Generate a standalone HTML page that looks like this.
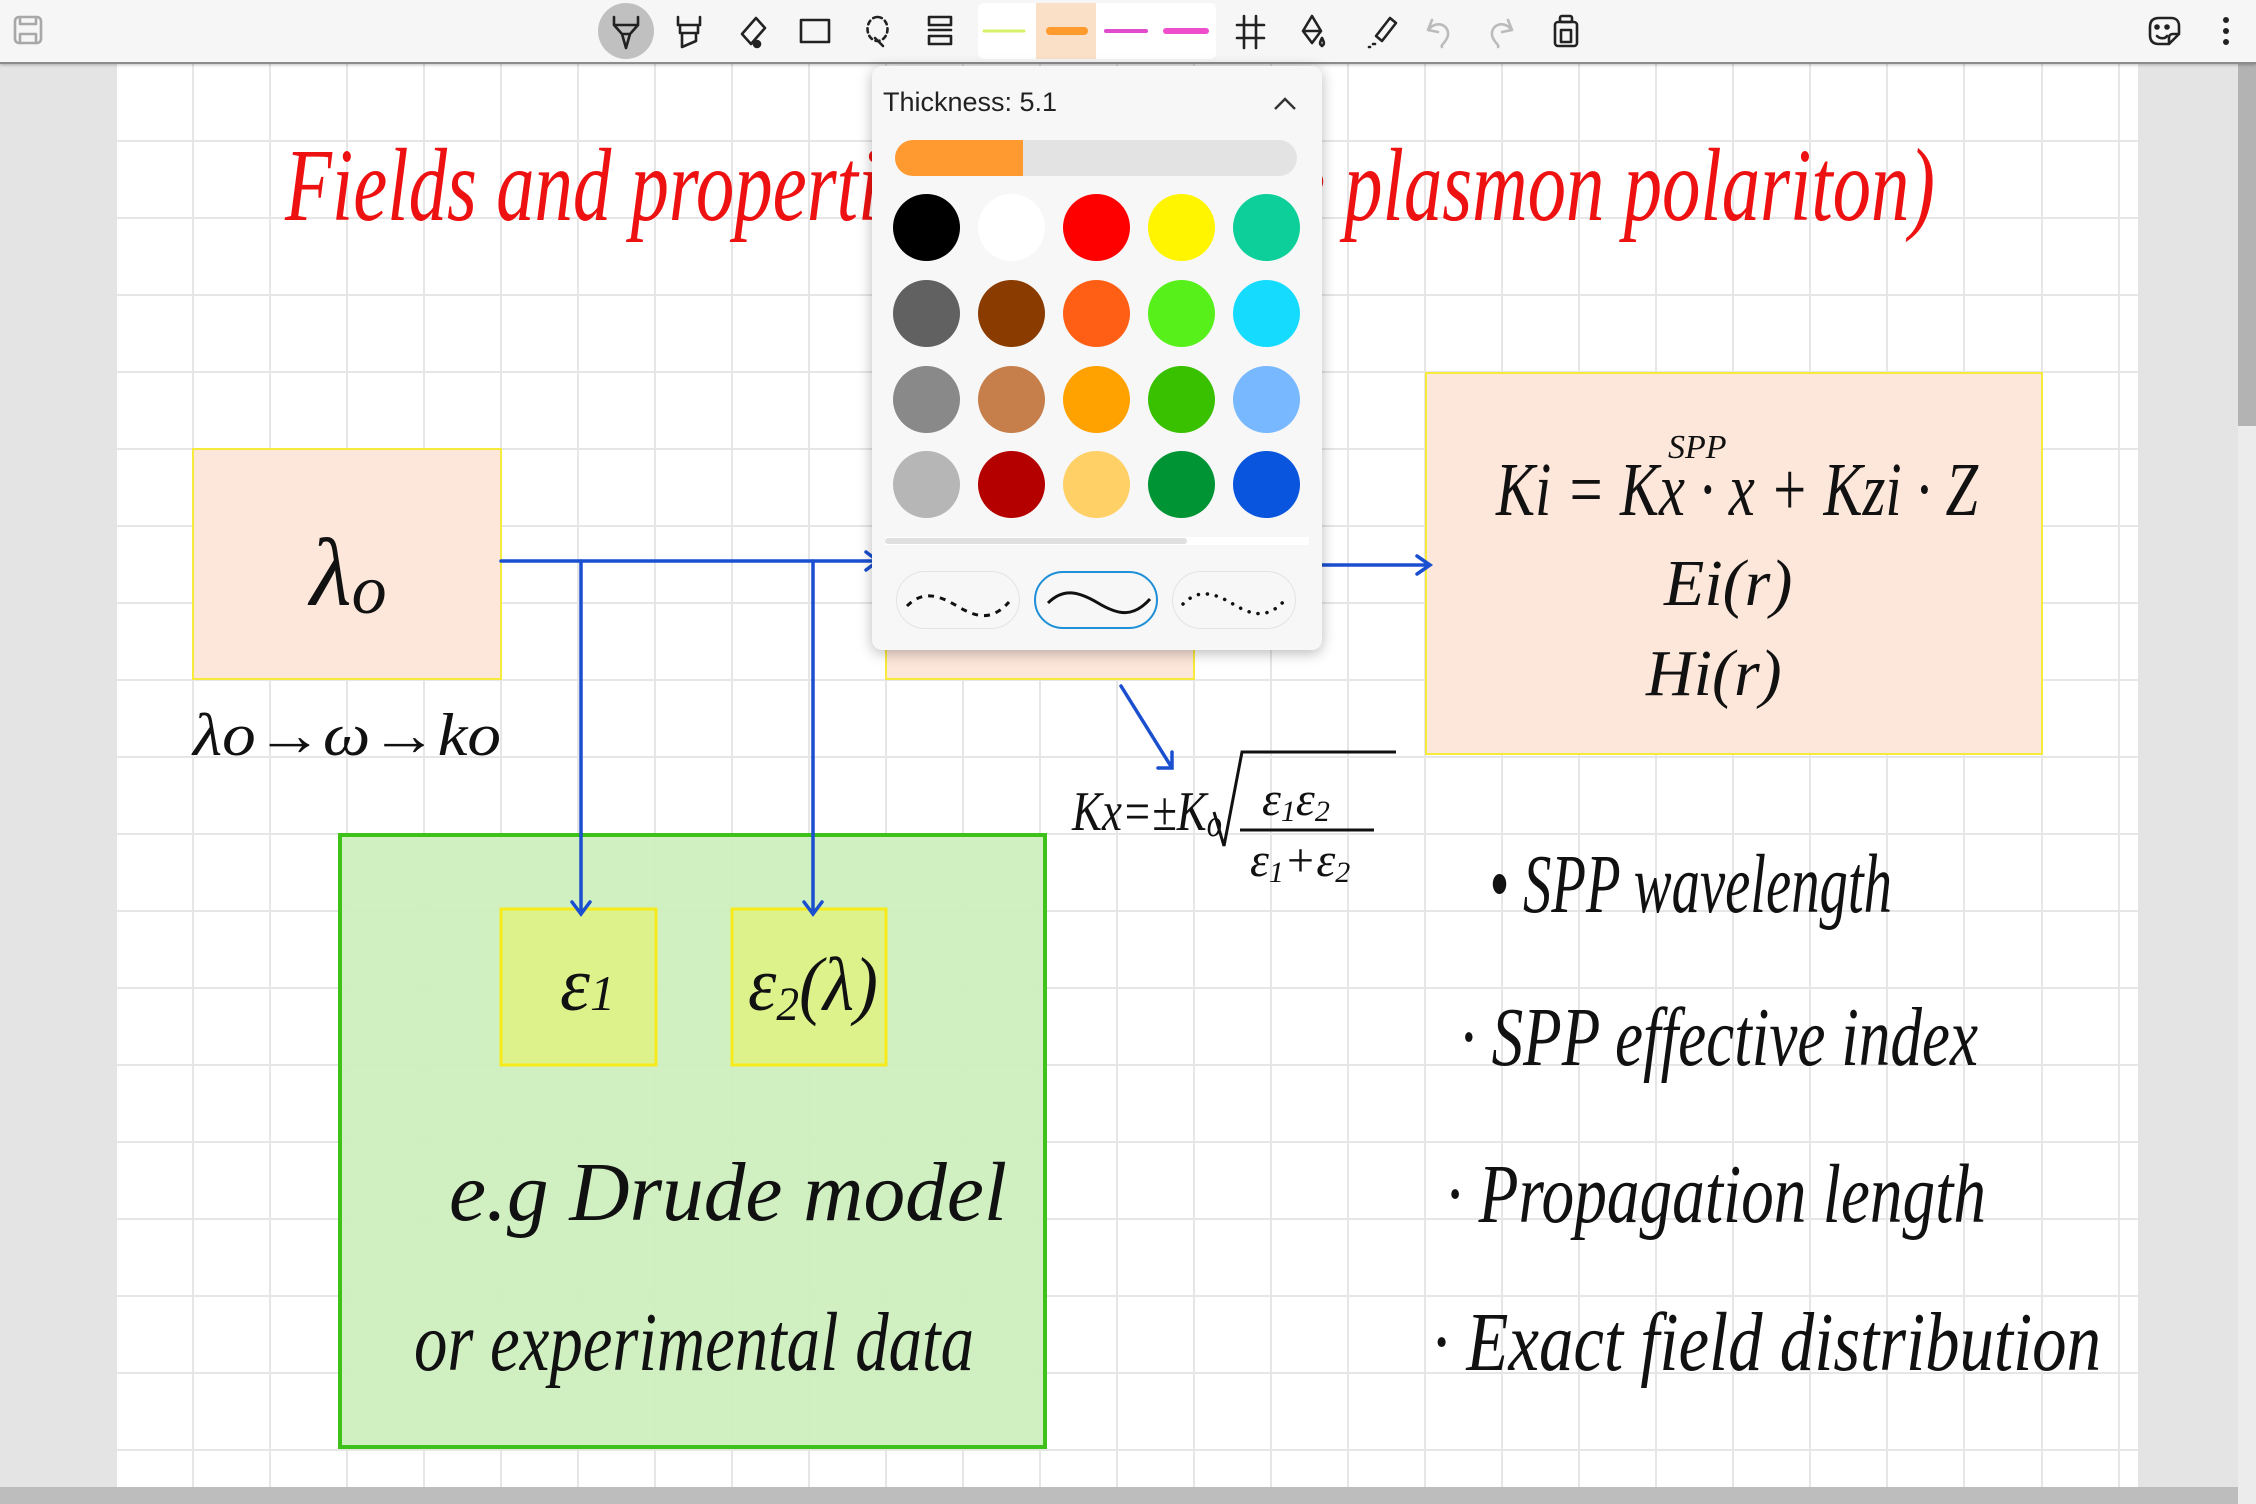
<!DOCTYPE html>
<html><head><meta charset="utf-8">
<style>
html,body{margin:0;padding:0;width:2256px;height:1504px;overflow:hidden;background:#e4e4e4;font-family:"Liberation Sans",sans-serif}
#tb{position:absolute;left:0;top:0;width:2256px;height:62px;background:#f6f6f6;border-bottom:2px solid #8c8c8c;box-shadow:0 1px 3px rgba(0,0,0,.25)}
#tb svg{position:absolute;left:0;top:0}
#pop{position:absolute;left:872px;top:66px;width:450px;height:584px;background:#f7f7f7;border-radius:10px;box-shadow:0 3px 14px rgba(0,0,0,.28)}
.lbl{position:absolute;left:11px;top:21px;font-size:27px;color:#222}
.c{position:absolute;width:67px;height:67px;border-radius:50%}
.ls{position:absolute;top:505px;width:124px;height:58px;border-radius:29px;border:1.5px solid #e3e3e3;box-sizing:border-box}
</style></head><body>
<svg width="2256" height="1504" style="position:absolute;left:0;top:0">
<rect x="117" y="64" width="2021" height="1424" fill="#fff"/>
<g stroke="#e6e6e6" stroke-width="2">
<path d="M193 64V1488M270 64V1488M347 64V1488M424 64V1488M501 64V1488M578 64V1488M655 64V1488M732 64V1488M809 64V1488M886 64V1488M963 64V1488M1040 64V1488M1117 64V1488M1194 64V1488M1271 64V1488M1348 64V1488M1425 64V1488M1502 64V1488M1579 64V1488M1656 64V1488M1733 64V1488M1810 64V1488M1887 64V1488M1964 64V1488M2042 64V1488M2119 64V1488"/>
<path d="M117 141H2138M117 218H2138M117 295H2138M117 372H2138M117 449H2138M117 526H2138M117 603H2138M117 680H2138M117 757H2138M117 834H2138M117 911H2138M117 988H2138M117 1065H2138M117 1142H2138M117 1219H2138M117 1296H2138M117 1373H2138M117 1450H2138"/>
</g>
<rect x="193" y="449" width="308" height="230" fill="#fde6da" stroke="#f6ea3a" stroke-width="2"/>
<rect x="886" y="449" width="308" height="230" fill="#fde6da" stroke="#f6ea3a" stroke-width="2"/>
<rect x="1426" y="373" width="616" height="381" fill="#fde6da" stroke="#f6ea3a" stroke-width="2"/>
<rect x="340" y="835" width="705" height="612" fill="#cdefbf" stroke="#3ec21a" stroke-width="4" fill-opacity=".95"/>
<rect x="501" y="909" width="155" height="156" fill="#def28c" stroke="#f6ea1a" stroke-width="3"/>
<rect x="732" y="909" width="154" height="156" fill="#def28c" stroke="#f6ea1a" stroke-width="3"/>
<g stroke="#1a4fd0" stroke-width="3.5" fill="none" stroke-linecap="round">
<path d="M501 561H878M866 552l12 9-12 9"/>
<path d="M1321 565H1430M1417 556l13 9-13 9"/>
<path d="M581 561V914M572 902l9 12 9-12"/>
<path d="M813 561V914M804 902l9 12 9-12"/>
<path d="M1121 686L1172 768M1172 752V768H1158"/>
</g>
<g font-family="Liberation Serif, serif" font-style="italic">
<text x="285" y="220" font-size="104" fill="#ee1111" textLength="1650" lengthAdjust="spacingAndGlyphs">Fields and properties of a surface plasmon polariton)</text>
<g fill="#111">
<text x="310" y="605" font-size="96">λ<tspan font-size="70" dy="8">o</tspan></text>
<text x="193" y="755" font-size="60" textLength="308" lengthAdjust="spacingAndGlyphs">λo→ω→ko</text>
<text x="560" y="1010" font-size="76">ε<tspan font-size="50">1</tspan></text>
<text x="748" y="1010" font-size="76" textLength="130" lengthAdjust="spacingAndGlyphs">ε<tspan font-size="48" dy="10">2</tspan><tspan dy="-10">(λ)</tspan></text>
<text x="449" y="1220" font-size="84" textLength="558" lengthAdjust="spacingAndGlyphs">e.g  Drude model</text>
<text x="414" y="1370" font-size="84" textLength="560" lengthAdjust="spacingAndGlyphs">or  experimental data</text>
<text x="1496" y="515" font-size="76" textLength="482" lengthAdjust="spacingAndGlyphs">Ki = Kx · x + Kzi · Z</text>
<text x="1668" y="458" font-size="34">SPP</text>
<text x="1664" y="605" font-size="66">Ei(r)</text>
<text x="1646" y="695" font-size="66">Hi(r)</text>
<text x="1072" y="830" font-size="56" textLength="150" lengthAdjust="spacingAndGlyphs">Kx=±K<tspan font-size="38" dy="6">o</tspan></text>
<path d="M1214 812l10 34 18-94h154" stroke="#111" stroke-width="3" fill="none"/>
<path d="M1240 830H1374" stroke="#111" stroke-width="3"/>
<text x="1262" y="815" font-size="48">ε<tspan font-size="30" dy="6">1</tspan><tspan dy="-6">ε</tspan><tspan font-size="30" dy="6">2</tspan></text>
<text x="1250" y="876" font-size="48">ε<tspan font-size="30" dy="6">1</tspan><tspan dy="-6">+ε</tspan><tspan font-size="30" dy="6">2</tspan></text>
<text x="1489" y="912" font-size="84" textLength="403" lengthAdjust="spacingAndGlyphs">• SPP wavelength</text>
<text x="1460" y="1065" font-size="84" textLength="518" lengthAdjust="spacingAndGlyphs">· SPP effective index</text>
<text x="1446" y="1222" font-size="84" textLength="540" lengthAdjust="spacingAndGlyphs">· Propagation length</text>
<text x="1432" y="1370" font-size="84" textLength="669" lengthAdjust="spacingAndGlyphs">· Exact field distribution</text>
</g></g>
<rect x="0" y="1487" width="2238" height="17" fill="#bdbdbd"/>
<rect x="2238" y="64" width="18" height="1440" fill="#ececec"/>
<rect x="2238" y="64" width="18" height="362" fill="#b3b3b3"/>
</svg>

<div id="tb"><svg width="2256" height="62" fill="none" stroke="#222" stroke-width="2.6" stroke-linejoin="round" stroke-linecap="round">
<g stroke="#a8a8a8"><rect x="15" y="17" width="26" height="26" rx="4"/><path d="M20 17v7h16v-7M20 43v-9h16v9"/></g>
<circle cx="626" cy="31" r="28" fill="#c0c0c0" stroke="none"/>
<path d="M614 17v8l8 9 4 14 4-14 8-9v-8M614 25h24M622 34h8"/>
<path d="M678 17v8h22v-8M680 25v8h18v-8M682 33v14l14-6v-8"/>
<path d="M742 34l14-16 9 10-14 16zM742 34l9 10M754 44h2"/><circle cx="757" cy="44" r="3" fill="#222"/>
<rect x="801" y="20" width="28" height="22"/>
<path d="M877 17a10 12 0 1 0 1 0" stroke-dasharray="4 4"/><path d="M875 38l8 8"/>
<path d="M929 17h22v8h-22zM929 36h22v8h-22zM929 30h22"/>
<rect x="978" y="3" width="238" height="56" rx="6" fill="#fff" stroke="none"/>
<rect x="1036" y="3" width="60" height="56" fill="#fbe0c8" stroke="none"/>
<path d="M984 31h40" stroke="#d6f06a" stroke-width="3"/>
<path d="M1050 31h34" stroke="#ff9a2e" stroke-width="8"/>
<path d="M1106 31h40" stroke="#e04ccc" stroke-width="4"/>
<path d="M1166 31h40" stroke="#ee4ecb" stroke-width="6"/>
<path d="M1244 16v32M1256 16v32M1237 25h27M1237 38h27"/>
<path d="M1303 31l9-15 9 15-9 12zM1303 31h18M1322 38c2 4 3 6 0 8-3-2-2-4 0-8"/>
<path d="M1376 36l14-18 6 5-14 18zM1373 44h2M1369 47h1"/>
<path d="M1432 20l-4 10 10 2M1429 29c8-9 20-4 19 6-1 7-8 10-6 12" stroke="#bbb"/>
<path d="M1508 20l4 10-10 2M1511 29c-8-9-20-4-19 6 1 7 8 10 6 12" stroke="#bbb"/>
<rect x="1555" y="22" width="22" height="24" rx="3"/><rect x="1560" y="16" width="12" height="6" rx="2"/><path d="M1561 30h10v12h-10z"/>
<path d="M2150 27c0-6 3-9 9-9h12c5 0 8 3 8 8v8l-10 10h-10c-6 0-9-3-9-9zM2169 44v-6c0-3 2-4 4-4h6M2157 36c3 3 8 3 10 0"/>
<circle cx="2157" cy="27" r="1.5" fill="#222"/><circle cx="2167" cy="27" r="1.5" fill="#222"/>
<g fill="#222" stroke="none"><circle cx="2226" cy="20" r="3"/><circle cx="2226" cy="31" r="3"/><circle cx="2226" cy="42" r="3"/></g>
</svg></div>

<div id="pop">
<div class="lbl">Thickness: 5.1</div>
<svg style="position:absolute;left:400px;top:28px" width="26" height="18"><path d="M3 15l10-10 10 10" fill="none" stroke="#333" stroke-width="2.4"/></svg>
<div style="position:absolute;left:23px;top:74px;width:402px;height:36px;border-radius:18px;background:#e3e3e3;overflow:hidden"><div style="width:128px;height:36px;background:#fe9a30"></div></div>
<div class="c" style="left:21px;top:128px;background:#000"></div>
<div class="c" style="left:106px;top:128px;background:#fff"></div>
<div class="c" style="left:191px;top:128px;background:#fe0000"></div>
<div class="c" style="left:276px;top:128px;background:#fff500"></div>
<div class="c" style="left:361px;top:128px;background:#0dcf9a"></div>
<div class="c" style="left:21px;top:214px;background:#616161"></div>
<div class="c" style="left:106px;top:214px;background:#8a3c00"></div>
<div class="c" style="left:191px;top:214px;background:#ff5f15"></div>
<div class="c" style="left:276px;top:214px;background:#57f01a"></div>
<div class="c" style="left:361px;top:214px;background:#15dcff"></div>
<div class="c" style="left:21px;top:300px;background:#898989"></div>
<div class="c" style="left:106px;top:300px;background:#c67e4a"></div>
<div class="c" style="left:191px;top:300px;background:#ffa200"></div>
<div class="c" style="left:276px;top:300px;background:#39c100"></div>
<div class="c" style="left:361px;top:300px;background:#77b8ff"></div>
<div class="c" style="left:21px;top:385px;background:#b6b6b6"></div>
<div class="c" style="left:106px;top:385px;background:#b50000"></div>
<div class="c" style="left:191px;top:385px;background:#ffd066"></div>
<div class="c" style="left:276px;top:385px;background:#009434"></div>
<div class="c" style="left:361px;top:385px;background:#0a55dd"></div>
<div style="position:absolute;left:13px;top:471px;width:424px;height:8px;background:#fff"><div style="width:302px;height:6px;margin-top:1px;border-radius:3px;background:#e0e0e0"></div></div>
<div class="ls" style="left:24px"><svg width="124" height="58"><path d="M10 34c15-15 30-12 50 0s35 15 52-4" fill="none" stroke="#111" stroke-width="3" stroke-dasharray="6 6"/></svg></div>
<div class="ls" style="left:162px;border:2px solid #1e8fd8"><svg width="124" height="58"><path d="M12 30c15-15 30-12 50 0s35 15 52-4" fill="none" stroke="#111" stroke-width="3"/></svg></div>
<div class="ls" style="left:300px"><svg width="124" height="58"><path d="M10 32c15-15 30-12 50 0s35 15 52-4" fill="none" stroke="#111" stroke-width="3.5" stroke-dasharray="0.1 9" stroke-linecap="round"/></svg></div>
</div>
</body></html>
